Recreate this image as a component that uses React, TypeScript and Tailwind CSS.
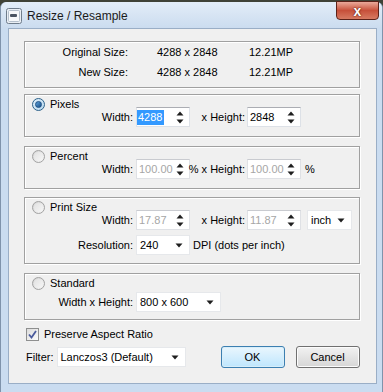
import React from "react";

const FONT = { fontFamily: '"Liberation Sans", Arial, sans-serif' };

function SpinArrows() {
  return (
    <svg width="8" height="15" viewBox="0 0 8 15" className="shrink-0">
      <path d="M4 1.5 L7.5 5.5 L0.5 5.5 Z" fill="#1e1e1e" />
      <path d="M0.5 9.5 L7.5 9.5 L4 13.5 Z" fill="#1e1e1e" />
    </svg>
  );
}

function DownArrow() {
  return (
    <svg width="8" height="5" viewBox="0 0 8 5" className="shrink-0">
      <path d="M0.5 0.5 L7.5 0.5 L4 4.5 Z" fill="#1e1e1e" />
    </svg>
  );
}

function Spin({ value, disabled, selected }: { value: string; disabled?: boolean; selected?: boolean }) {
  return (
    <div
      className={
        "w-[54px] h-[20px] flex items-center bg-white border pr-[5px] " +
        (disabled ? "border-[#dfe1e5] border-t-[#c9cbd0]" : "border-[#dde1e7] border-t-[#abadb3]")
      }
    >
      {selected ? (
        <span className="bg-[#3399ff] text-white pl-[1px] pr-[2px] leading-[15px]">{value}</span>
      ) : (
        <span className={"pl-[2px] " + (disabled ? "text-[#a6a6a6]" : "text-black")}>{value}</span>
      )}
      <div className="flex-1" />
      <SpinArrows />
    </div>
  );
}

function Combo({ value, className }: { value: string; className: string }) {
  return (
    <div className={"h-[20px] flex items-center bg-white border border-[#e6e8eb] pl-[3px] pr-[6px] " + className}>
      <span className="whitespace-nowrap">{value}</span>
      <div className="flex-1" />
      <DownArrow />
    </div>
  );
}

function Radio({ checked }: { checked?: boolean }) {
  if (checked) {
    return (
      <div className="w-[13px] h-[13px] rounded-full border border-[#2c628b] bg-gradient-to-br from-[#dff0fb] to-[#b8d8ee] flex items-center justify-center shrink-0">
        <div className="w-[7px] h-[7px] rounded-full bg-gradient-to-br from-[#5ea3dc] to-[#164e86] border border-[#1c4f84]" />
      </div>
    );
  }
  return (
    <div className="w-[13px] h-[13px] rounded-full border border-[#a2a2a2] bg-gradient-to-br from-[#d4d4d4] to-[#f7f7f7] flex items-center justify-center shrink-0">
      <div className="w-[9px] h-[9px] rounded-full bg-gradient-to-br from-[#e2e2e2] to-[#f6f6f6]" />
    </div>
  );
}

function Group({ className, children }: { className: string; children: React.ReactNode }) {
  return (
    <div
      className={
        "ml-[15px] w-[336px] border border-[#a0a0a0] shadow-[1px_1px_0_#ffffff,inset_1px_1px_0_#ffffff] flex flex-col " +
        className
      }
    >
      {children}
    </div>
  );
}

function RadioRow({ label, checked }: { label: string; checked?: boolean }) {
  return (
    <div className="h-[14px] flex items-center pl-[7px] gap-[5px]">
      <Radio checked={checked} />
      <span>{label}</span>
    </div>
  );
}

export default function App() {
  return (
    <div className="w-[383px] h-[392px] bg-[#3f4237] overflow-hidden text-[11px] text-black whitespace-nowrap" style={FONT}>
      <div className="mt-[2px] h-[390px] bg-[#cadcf0] rounded-t-[6px] border-l border-r border-[#7f93ab] flex flex-col">
        {/* Title bar */}
        <div className="h-[26px] flex items-center relative rounded-t-[6px] bg-gradient-to-b from-[#e3edf8] to-[#cbdcef]">
          <svg width="16" height="16" viewBox="0 0 16 16" className="ml-[5px] mt-[2px]">
            <rect x="0.5" y="0.5" width="15" height="15" rx="2" fill="#e9eef4" stroke="#6f7d8c" />
            <rect x="2.5" y="2.5" width="11" height="11" rx="1" fill="#f7f9fb" stroke="#b5c0cc" />
            <rect x="4" y="6" width="7" height="3" rx="1" fill="#4b5563" />
          </svg>
          <span className="ml-[5px] mt-[2px] text-[12px] text-[#1b1b1b]">Resize / Resample</span>
          <div className="absolute left-[335px] top-[-1px] w-[43px] h-[19px] rounded-b-[4px] border border-[#5c2219] bg-gradient-to-b from-[#e9a99a] via-[#c7503a] to-[#d77a62] flex items-center justify-center">
            <span className="text-white font-bold text-[14px] leading-none [text-shadow:0_0_2px_#6a1e10,0_0_1px_#6a1e10]">x</span>
          </div>
        </div>

        {/* Client area */}
        <div className="ml-[7px] w-[369px] h-[356px] border border-[#9aaec6] bg-[#f0f0f0] flex flex-col">
          {/* Info */}
          <Group className="mt-[12px] h-[47px] pt-[3px]">
            <div className="h-[14px] flex items-center">
              <span className="w-[103px] text-right">Original Size:</span>
              <span className="ml-[29px] w-[92px]">4288 x 2848</span>
              <span>12.21MP</span>
            </div>
            <div className="h-[14px] mt-[6px] flex items-center">
              <span className="w-[103px] text-right">New Size:</span>
              <span className="ml-[29px] w-[92px]">4288 x 2848</span>
              <span>12.21MP</span>
            </div>
          </Group>

          {/* Pixels */}
          <Group className="mt-[6px] h-[43px] pt-[2px]">
            <RadioRow label="Pixels" checked />
            <div className="h-[20px] mt-[-4px] flex items-center">
              <span className="w-[108px] text-right">Width:</span>
              <div className="ml-[3px]">
                <Spin value="4288" selected />
              </div>
              <span className="w-[55px] text-right">x Height:</span>
              <div className="ml-[2px]">
                <Spin value="2848" />
              </div>
            </div>
          </Group>

          {/* Percent */}
          <Group className="mt-[9px] h-[43px] pt-[2px]">
            <RadioRow label="Percent" />
            <div className="h-[20px] mt-[-4px] flex items-center">
              <span className="w-[108px] text-right">Width:</span>
              <div className="ml-[3px]">
                <Spin value="100.00" disabled />
              </div>
              <div className="w-[55px] flex justify-end gap-[3px] whitespace-nowrap">
                <span>%</span>
                <span>x Height:</span>
              </div>
              <div className="ml-[2px]">
                <Spin value="100.00" disabled />
              </div>
              <span className="ml-[4px]">%</span>
            </div>
          </Group>

          {/* Print Size */}
          <Group className="mt-[8px] h-[67px] pt-[2px]">
            <RadioRow label="Print Size" />
            <div className="h-[20px] mt-[-4px] flex items-center">
              <span className="w-[108px] text-right">Width:</span>
              <div className="ml-[3px]">
                <Spin value="17.87" disabled />
              </div>
              <span className="w-[55px] text-right">x Height:</span>
              <div className="ml-[2px]">
                <Spin value="11.87" disabled />
              </div>
              <Combo value="inch" className="ml-[6px] w-[45px]" />
            </div>
            <div className="h-[20px] mt-[5px] flex items-center">
              <span className="w-[108px] text-right">Resolution:</span>
              <Combo value="240" className="ml-[3px] w-[54px]" />
              <span className="ml-[3px]">DPI (dots per inch)</span>
            </div>
          </Group>

          {/* Standard */}
          <Group className="mt-[9px] h-[47px] pt-[2px]">
            <RadioRow label="Standard" />
            <div className="h-[20px] mt-[2px] flex items-center">
              <span className="w-[108px] text-right">Width x Height:</span>
              <Combo value="800 x 600" className="ml-[3px] w-[85px]" />
            </div>
          </Group>

          {/* Checkbox */}
          <div className="mt-[7px] h-[14px] ml-[17px] flex items-center gap-[5px]">
            <div className="w-[13px] h-[13px] border border-[#8e8f8f] bg-gradient-to-br from-[#dcdcdc] to-[#fbfbfb] flex items-center justify-center">
              <svg width="9" height="9" viewBox="0 0 9 9">
                <path d="M1 4.5 L3.5 7.5 L8 1" fill="none" stroke="#4a5a9c" strokeWidth="1.8" />
              </svg>
            </div>
            <span>Preserve Aspect Ratio</span>
          </div>

          {/* Filter + buttons */}
          <div className="mt-[5px] h-[22px] ml-[17px] flex items-center">
            <span>Filter:</span>
            <Combo value="Lanczos3 (Default)" className="ml-[3px] w-[129px]" />
            <div className="ml-[35px] w-[64px] h-[22px] rounded-[3px] border border-[#3c7fb1] bg-gradient-to-b from-[#eaf6fd] to-[#bee6fd] shadow-[inset_0_0_0_1px_#d8eef9] flex items-center justify-center">
              OK
            </div>
            <div className="ml-[11px] w-[64px] h-[22px] rounded-[3px] border border-[#707070] bg-gradient-to-b from-[#f2f2f2] to-[#d6d6d6] shadow-[inset_0_0_0_1px_#fcfcfc] flex items-center justify-center">
              Cancel
            </div>
          </div>
        </div>
      </div>
    </div>
  );
}
